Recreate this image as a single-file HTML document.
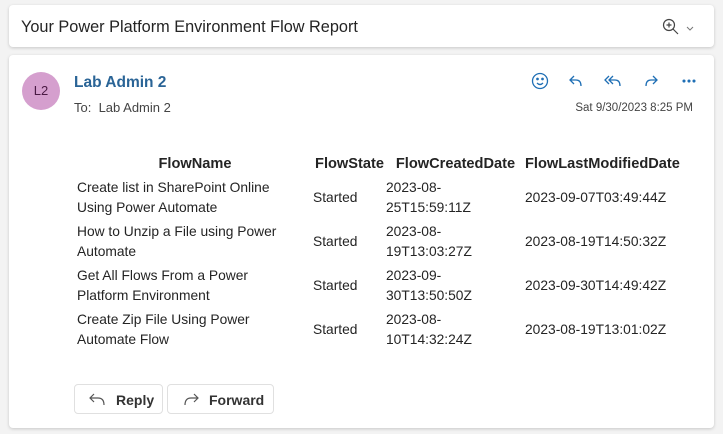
<!DOCTYPE html><html><head><style>
body{margin:0;width:723px;height:434px;background:#f3f3f3;font-family:"Liberation Sans",sans-serif;color:#242424;position:relative;overflow:hidden}
.card{position:absolute;left:9px;right:9px;background:#fff;border-radius:4px;box-shadow:0 1px 3px rgba(0,0,0,.18)}
.a{position:absolute}
td,th{font-size:13.8px;padding:0;line-height:20px;vertical-align:middle}
th{font-weight:bold;text-align:center;height:24px;font-size:14.6px;white-space:nowrap}
tr.r td{height:44px}
.btn{position:absolute;top:384px;height:30px;border:1px solid #e0e0e0;border-radius:4px;background:#fff;font-size:14px;font-weight:bold;color:#333;box-sizing:border-box}
svg{position:absolute}
</style></head><body>
<div class="card" style="top:5px;height:42px">
<div class="a" style="left:12px;top:13px;font-size:16.3px;color:#242424">Your Power Platform Environment Flow Report</div>
<svg style="left:652px;top:12px" width="40" height="22" viewBox="0 0 40 22"><circle cx="8" cy="8" r="5.5" fill="none" stroke="#444" stroke-width="1.2"/><path d="M12 12l5 5M5.5 8h5M8 5.5v5" stroke="#444" stroke-width="1.2"/><path d="M26 10l3 3 3-3" fill="none" stroke="#777" stroke-width="1"/></svg>
</div>
<div class="card" style="top:55px;height:373px">
<div class="a" style="left:13px;top:17px;width:38px;height:38px;border-radius:50%;background:#d59fce;font-size:13px;color:#4a1a44;text-align:center;line-height:38px">L2</div>
<div class="a" style="left:65px;top:19px;font-size:15.5px;font-weight:bold;color:#2a6496">Lab Admin 2</div>
<div class="a" style="left:65px;top:45px;font-size:13px;color:#444">To:&nbsp; Lab Admin 2</div>
<div class="a" style="right:21px;top:47px;font-size:11.5px;color:#444">Sat 9/30/2023 8:25 PM</div>
<svg style="left:520px;top:15px" width="170" height="22" viewBox="0 0 170 22" fill="none" stroke="#1f6fb5" stroke-width="1.3">
<circle cx="11" cy="11" r="7.5"/><circle cx="8.5" cy="9" r=".7" fill="#1f6fb5"/><circle cx="13.5" cy="9" r=".7" fill="#1f6fb5"/><path d="M8 13q3 3 6 0"/>
<path d="M45 6l-4 4 4 4M41 10h6q5 0 5 6"/>
<path d="M80 6l-4 4 4 4M84 6l-4 4 4 4M80 10h6q5 0 5 6"/>
<path d="M124 6l4 4-4 4M128 10h-6q-5 0-5 6"/>
<circle cx="155" cy="11" r=".9" fill="#1f6fb5"/><circle cx="160" cy="11" r=".9" fill="#1f6fb5"/><circle cx="165" cy="11" r=".9" fill="#1f6fb5"/>
</svg>
<table class="a" style="left:68px;top:97px;border-collapse:collapse">
<tr><th style="width:236px">FlowName</th><th style="width:73px">FlowState</th><th style="width:139px">FlowCreatedDate</th><th>FlowLastModifiedDate</th></tr>
<tr class="r"><td>Create list in SharePoint Online<br>Using Power Automate</td><td>Started</td><td>2023-08-<br>25T15:59:11Z</td><td>2023-09-07T03:49:44Z</td></tr>
<tr class="r"><td>How to Unzip a File using Power<br>Automate</td><td>Started</td><td>2023-08-<br>19T13:03:27Z</td><td>2023-08-19T14:50:32Z</td></tr>
<tr class="r"><td>Get All Flows From a Power<br>Platform Environment</td><td>Started</td><td>2023-09-<br>30T13:50:50Z</td><td>2023-09-30T14:49:42Z</td></tr>
<tr class="r"><td>Create Zip File Using Power<br>Automate Flow</td><td>Started</td><td>2023-08-<br>10T14:32:24Z</td><td>2023-08-19T13:01:02Z</td></tr>
</table>
</div>
<div class="btn" style="left:74px;width:89px"><svg style="left:14px;top:7px" width="18" height="14" viewBox="0 0 18 14" fill="none" stroke="#555" stroke-width="1.2"><path d="M5 2L1 6l4 4M1 6h8q6 0 6 7"/></svg><span class="a" style="left:41px;top:7px">Reply</span></div>
<div class="btn" style="left:167px;width:107px"><svg style="left:14px;top:7px" width="18" height="14" viewBox="0 0 18 14" fill="none" stroke="#555" stroke-width="1.2"><path d="M12 2l4 4-4 4M16 6H9Q3 6 3 13"/></svg><span class="a" style="left:41px;top:7px">Forward</span></div>
</body></html>
